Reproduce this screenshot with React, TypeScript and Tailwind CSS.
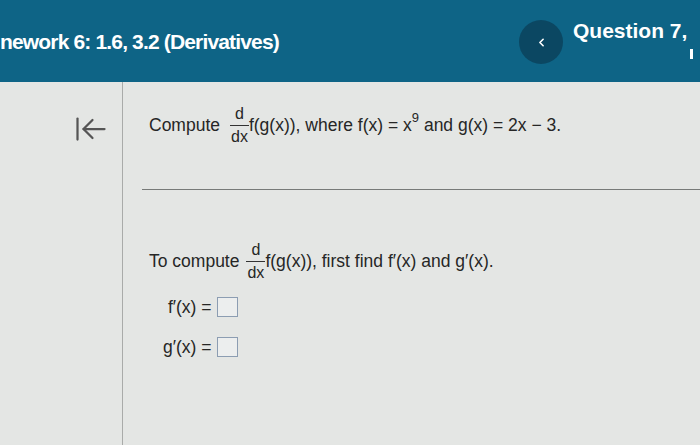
import React from "react";
import { ArrowLeftToLine, ChevronLeft } from "lucide-react";

// d/dx written as a stacked fraction
const Ddx = () => (
  <span className="inline-flex flex-col items-center align-middle mx-[3px] leading-none text-[16px]">
    <span className="pb-[3px]">d</span>
    <span className="border-t border-[#333] pt-[3px] px-[1px]">dx</span>
  </span>
);

const AnswerBox = () => (
  <span className="inline-block w-[21px] h-[20px] border border-[#8c9db2] bg-[#eceeee] align-middle ml-[5px]" />
);

export default function App() {
  return (
    <div
      className="w-[700px] h-[445px] overflow-hidden flex flex-col bg-[#e4e6e4] text-[#262626]"
      style={{ fontFamily: '"Liberation Sans", Arial, sans-serif' }}
    >
      {/* header */}
      <div className="h-[82px] bg-[#0e6486] flex items-start text-white shrink-0">
        <div className="w-[500px] pt-[26px] text-[21px] font-bold tracking-[-0.04em] whitespace-nowrap">
          nework 6: 1.6, 3.2 (Derivatives)
        </div>
        <div className="ml-[19px] mt-[20px] w-[44px] h-[44px] rounded-full bg-[#0b4762] flex items-center justify-center">
          <ChevronLeft size={13} strokeWidth={3} />
        </div>
        <div className="ml-[10px] pt-[15px] flex flex-col">
          <span className="text-[21px] font-bold whitespace-nowrap">Question 7,</span>
          <span className="self-end w-[3px] h-[10px] bg-white mt-[2px] mr-[-6px]" />
        </div>
      </div>

      {/* body */}
      <div className="flex flex-1">
        <div className="w-[123px] border-r border-[#a9aba9] flex justify-end pr-[13px] pt-[29px]">
          <ArrowLeftToLine size={36} strokeWidth={1.5} className="text-[#555]" />
        </div>
        <div className="flex-1 flex flex-col">
          <div className="pl-[26px] pt-[24px] h-[107px] text-[17.5px]">
            <div className="flex items-center whitespace-nowrap">
              <span>Compute</span>
              <span className="ml-[7px]"><Ddx /></span>
              <span className="ml-[-3px]">
                f(g(x)), where f(x) = x<sup className="text-[13px] relative top-[-9px]">9</sup> and g(x) = 2x − 3.
              </span>
            </div>
          </div>
          <div className="ml-[19px] border-t border-[#777a78]" />
          <div className="pl-[26px] pt-[52px] text-[17.5px]">
            <div className="flex items-center whitespace-nowrap">
              <span>To compute</span>
              <span className="ml-[4px]"><Ddx /></span>
              <span className="ml-[-3px]">f(g(x)), first find f′(x) and g′(x).</span>
            </div>
            <div className="mt-[13px] ml-[14px] flex flex-col gap-[14px] w-fit items-end">
              <div className="flex items-center">
                <span>f′(x) =</span>
                <AnswerBox />
              </div>
              <div className="flex items-center">
                <span>g′(x) =</span>
                <AnswerBox />
              </div>
            </div>
          </div>
        </div>
      </div>
    </div>
  );
}
